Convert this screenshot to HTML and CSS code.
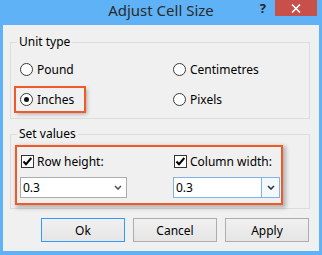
FILE: index.html
```html
<!DOCTYPE html>
<html lang="en">
<head>
    <meta charset="UTF-8">
    <meta name="viewport" content="width=device-width, initial-scale=1.0">
    <title>Adjust Cell Size</title>
    <link rel="stylesheet" href="styles.css">
</head>
<body>
    <div class="window">
        <div class="titlebar">
            <span></span>
            <div class="title">Adjust Cell Size</div>
            <div class="controls">
                <span class="help">?</span>
                <span class="close">
                    <svg width="10" height="9" viewBox="0 0 10 9"><path d="M1 0.5 L9 8.5 M9 0.5 L1 8.5" stroke="#fff" stroke-width="1.6"/></svg>
                </span>
            </div>
        </div>
        <div class="client">
            <fieldset class="group unit">
                <legend>Unit type</legend>
                <div class="options">
                    <label class="option"><span class="radio"></span>Pound</label>
                    <label class="option"><span class="radio"></span>Centimetres</label>
                    <label class="option marked"><span class="radio checked"></span>Inches</label>
                    <label class="option"><span class="radio"></span>Pixels</label>
                </div>
            </fieldset>
            <fieldset class="group values">
                <legend>Set values</legend>
                <div class="marked-box">
                    <div class="field">
                        <label class="check">
                            <svg class="box" width="13" height="13" viewBox="0 0 13 13"><rect x="0.5" y="0.5" width="12" height="12" fill="#fff" stroke="#333"/><path d="M2.5 6.5 L5 9.2 L10.3 3" fill="none" stroke="#000" stroke-width="2"/></svg>
                            Row height:
                        </label>
                        <div class="combo">
                            <span class="value">0.3</span>
                            <span class="arrow"><svg width="8" height="5" viewBox="0 0 8 5"><path d="M1 1 L4 4 L7 1" fill="none" stroke="#555" stroke-width="1.6"/></svg></span>
                        </div>
                    </div>
                    <div class="field">
                        <label class="check">
                            <svg class="box" width="13" height="13" viewBox="0 0 13 13"><rect x="0.5" y="0.5" width="12" height="12" fill="#fff" stroke="#333"/><path d="M2.5 6.5 L5 9.2 L10.3 3" fill="none" stroke="#000" stroke-width="2"/></svg>
                            Column width:
                        </label>
                        <div class="combo focused">
                            <span class="value">0.3</span>
                            <span class="arrow"><svg width="8" height="5" viewBox="0 0 8 5"><path d="M1 1 L4 4 L7 1" fill="none" stroke="#333" stroke-width="1.6"/></svg></span>
                        </div>
                    </div>
                </div>
            </fieldset>
            <div class="buttons">
                <button class="default">Ok</button>
                <button>Cancel</button>
                <button>Apply</button>
            </div>
        </div>
    </div>
</body>
</html>
```
FILE: styles.css
```css
body {
    margin: 0;
    font-family: "Noto Sans", Arial, sans-serif;
    font-size: 12px;
    color: #000;
}
.window {
    width: 322px;
    height: 255px;
    background: #5fb2f6;
    display: flex;
    flex-direction: column;
}
.titlebar {
    height: 25px;
    display: grid;
    grid-template-columns: 1fr auto 1fr;
}
.title {
    font-size: 15px;
    line-height: 21px;
    color: #2b2b2b;
}
.controls {
    display: flex;
    justify-content: flex-end;
    align-items: flex-start;
}
.help {
    font-weight: bold;
    font-size: 13px;
    line-height: 16px;
    color: #222;
    margin-right: 9px;
}
.close {
    width: 42px;
    height: 16px;
    margin-right: 5px;
    background: #c7504b;
    display: flex;
    align-items: center;
    justify-content: center;
}
.client {
    flex: 1;
    margin: 0 3px 4px;
    background: #f0f0f0;
    display: flex;
    flex-direction: column;
}
.group {
    margin: 0 9px 0 7px;
    border: 1px solid #dcdcdc;
    padding: 0 6px;
    min-width: 0;
}
.group legend {
    padding: 0 2px;
    line-height: 16px;
}
.unit {
    margin-top: 9px;
    padding-bottom: 7px;
}
.options {
    margin: 8px 0 0 3px;
    display: grid;
    grid-template-columns: 153px 1fr;
    row-gap: 7px;
}
.option {
    height: 23px;
    display: flex;
    align-items: center;
    gap: 4px;
}
.option.marked {
    width: 68px;
    margin-left: -4px;
    padding-left: 4px;
    box-sizing: border-box;
    box-shadow: 0 0 0 2px #f05a28, 2px 2px 4px 1px rgba(0, 0, 0, 0.3);
}
.radio {
    width: 11px;
    height: 11px;
    border: 1px solid #3a3a3a;
    border-radius: 50%;
    background: #fff;
    display: flex;
    align-items: center;
    justify-content: center;
}
.radio.checked::after {
    content: "";
    width: 5px;
    height: 5px;
    border-radius: 50%;
    background: #111;
}
.values {
    margin-top: 7px;
    padding-bottom: 3px;
}
.marked-box {
    width: 268px;
    box-sizing: border-box;
    margin: 3px 0 0 -2px;
    border: 2px solid #f05a28;
    padding: 6px 1px 5px 3px;
    box-shadow: 2px 2px 4px 1px rgba(0, 0, 0, 0.25);
    display: grid;
    grid-template-columns: 107px 107px;
    column-gap: 46px;
}
.field {
    display: flex;
    flex-direction: column;
    gap: 7px;
}
.check {
    height: 17px;
    display: flex;
    align-items: center;
    gap: 3px;
}
.check .box {
    margin-left: 1px;
}
.combo {
    height: 21px;
    box-sizing: border-box;
    border: 1px solid #acacac;
    background: #fff;
    display: flex;
    align-items: center;
}
.combo .value {
    flex: 1;
    padding-left: 2px;
}
.combo .arrow {
    width: 17px;
    height: 100%;
    display: flex;
    align-items: center;
    justify-content: center;
}
.combo.focused {
    border-color: #7eb4ea;
}
.combo.focused .arrow {
    border-left: 1px solid #7eb4ea;
    background: #f3f8fd;
}
.buttons {
    margin-top: 9px;
    padding-right: 10px;
    display: flex;
    justify-content: flex-end;
    gap: 8px;
}
button {
    width: 84px;
    height: 24px;
    font-family: inherit;
    font-size: 12px;
    color: #000;
    border: 1px solid #adadad;
    background: linear-gradient(#f0f0f0, #e5e5e5);
    padding: 0;
}
button.default {
    border-color: #3399ff;
}
```
